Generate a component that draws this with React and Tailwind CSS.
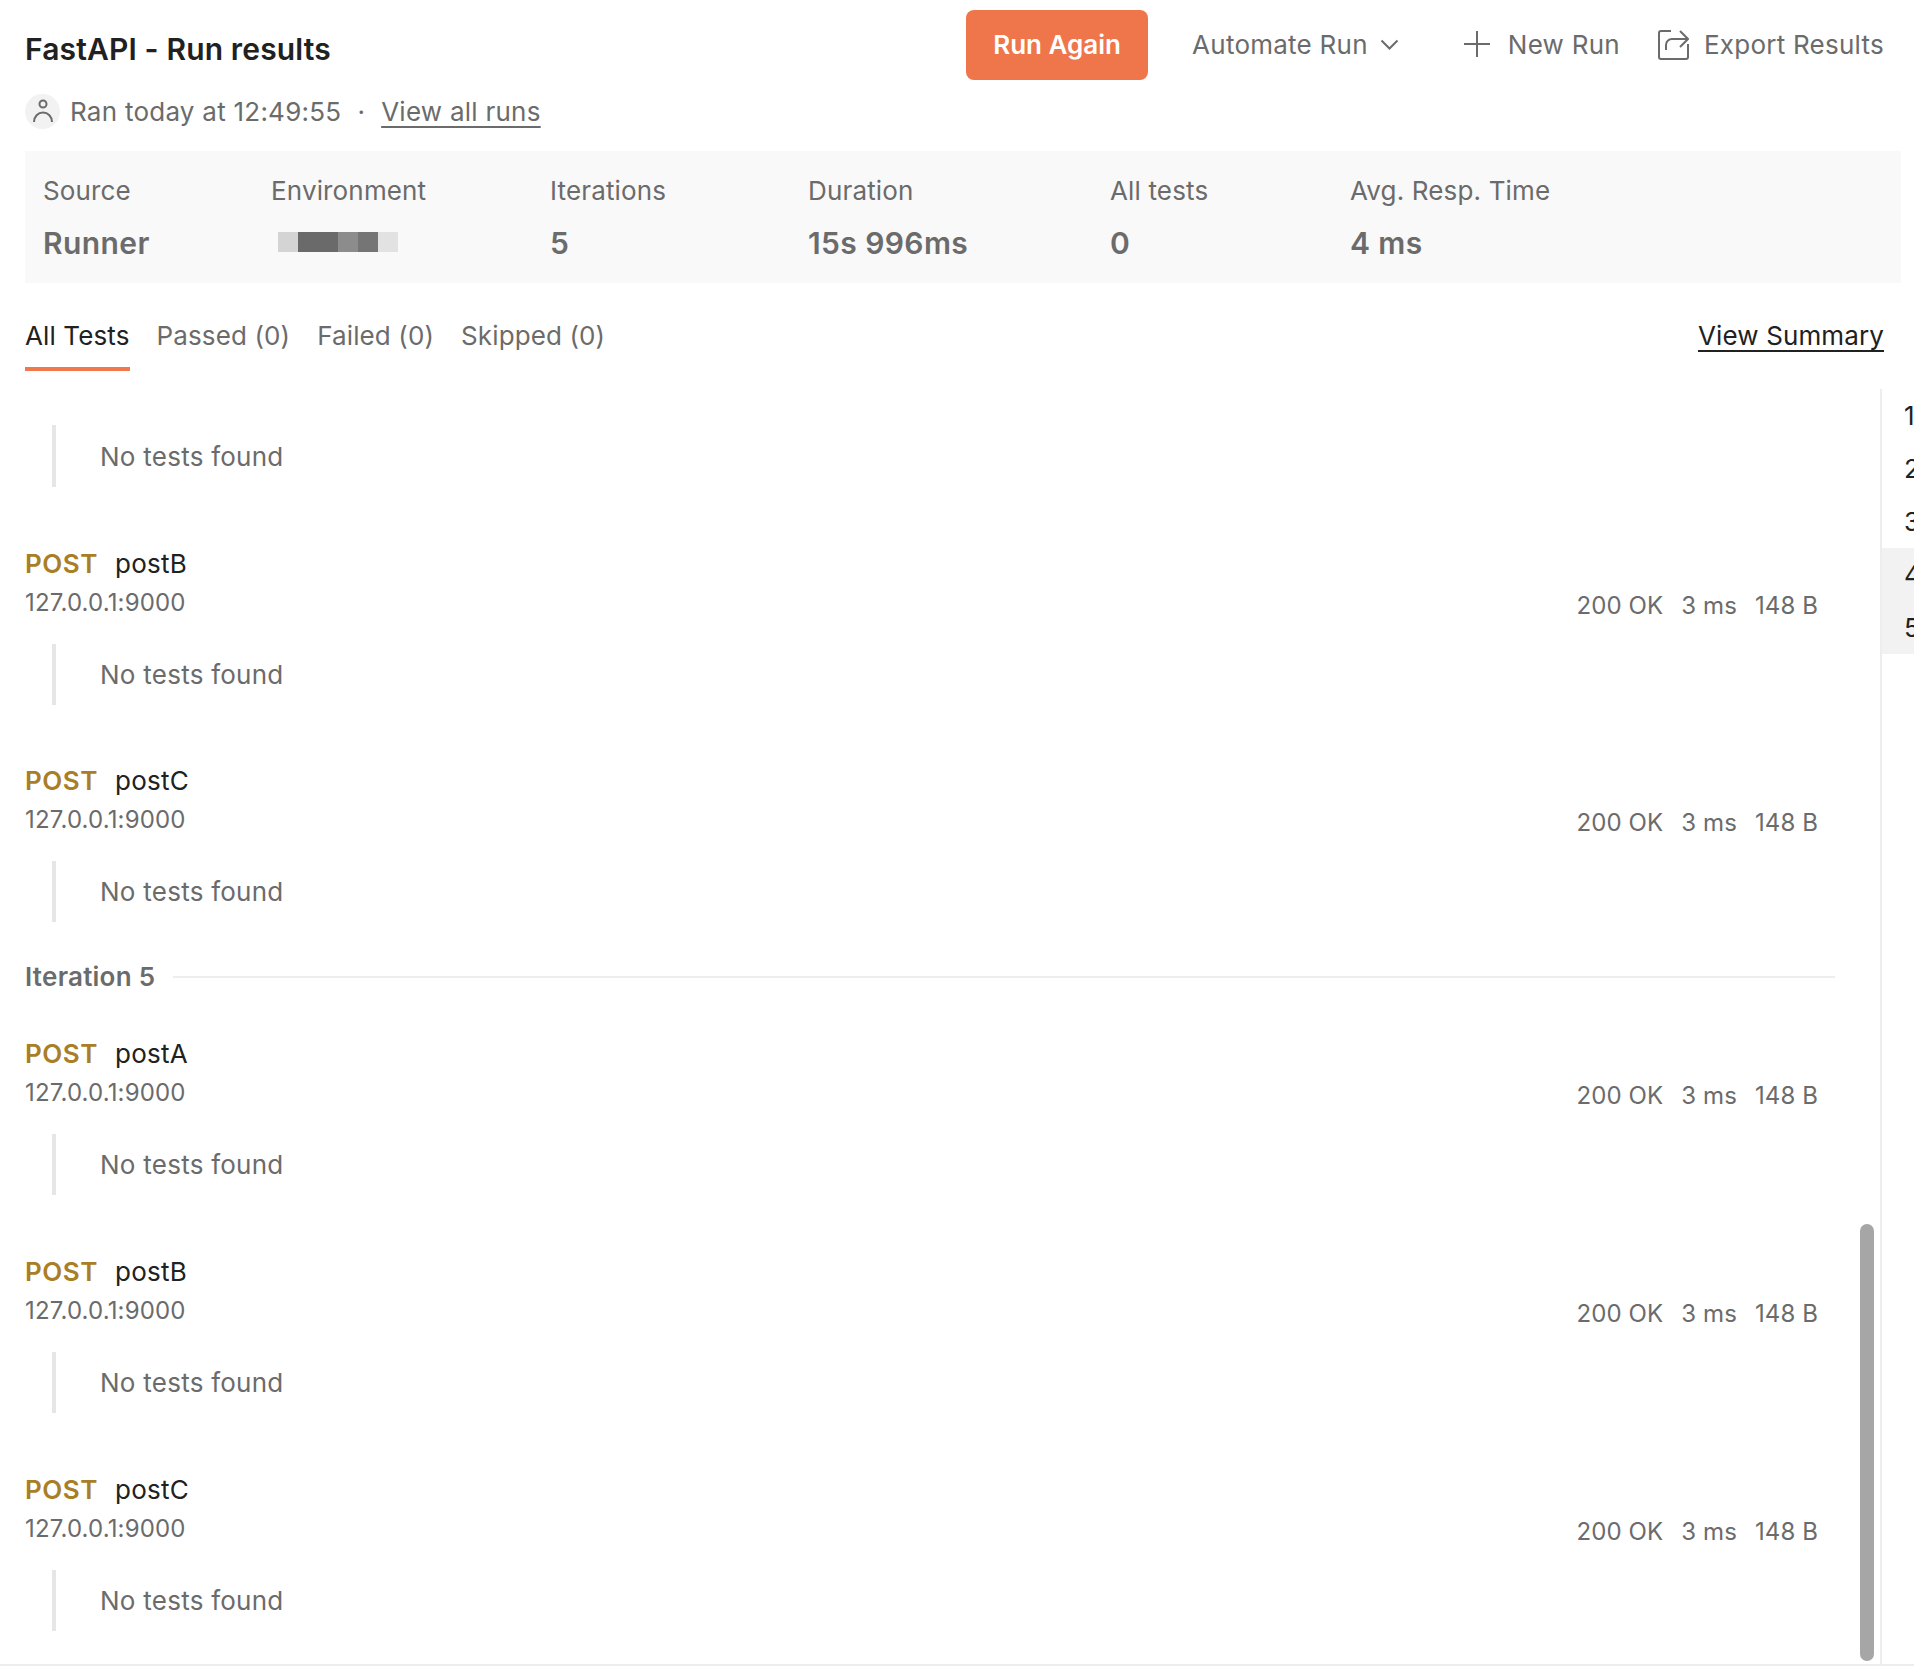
import React from "react";

const Req = ({ name }) => (
  <div className="h-[218px] flex flex-col">
    <div className="flex items-start justify-between pr-[62px]">
      <div>
        <div className="h-[39px] flex items-center text-[26px]">
          <span className="font-semibold text-[#a97e27] w-[90px] tracking-[0.5px]">POST</span>
          <span className="text-[#212121]">{name}</span>
        </div>
        <div className="h-[39px] flex items-center text-[24px] text-[#6b6b6b] tracking-[0.15px]">127.0.0.1:9000</div>
      </div>
      <Meta />
    </div>
    <Found />
  </div>
);

const Meta = () => (
  <div className="mt-[46px] h-[32px] flex items-center gap-[18px] text-[24px] text-[#6b6b6b] tracking-[0.1px]">
    <span>200 OK</span>
    <span>3 ms</span>
    <span>148 B</span>
  </div>
);

const Found = () => (
  <div className="mt-[22px] ml-[27px] h-[61px] border-l-4 border-[#e6e6e6] pl-[44px] flex items-center text-[26px] text-[#6b6b6b]">
    No tests found
  </div>
);

const Stat = ({ w, label, value }) => (
  <div style={{ width: w }}>
    <div className="h-[32px] flex items-center text-[26px] text-[#6b6b6b] tracking-[0.15px]">{label}</div>
    <div className="mt-[21px] h-[32px] flex items-center text-[30px] font-semibold text-[#6b6b6b] tracking-[0.4px]">{value}</div>
  </div>
);

export default function App() {
  return (
    <div className="w-[1914px] h-[1668px] overflow-hidden bg-white font-['Inter',sans-serif] tracking-[0.25px] flex flex-col">
      <header className="h-[151px] flex justify-between pl-[25px] pr-[30px]">
        <div>
          <h1 className="mt-[30px] h-[38px] flex items-center text-[30px] font-semibold text-[#212121] tracking-[0.15px]">FastAPI - Run results</h1>
          <div className="mt-[24px] flex items-center text-[26px] text-[#6b6b6b]">
            <span className="w-[35px] h-[35px] rounded-full bg-[#f2f2f2] flex items-center justify-center mr-[10px]">
              <svg width="22" height="26" viewBox="0 0 22 26" fill="none" stroke="#6b6b6b" strokeWidth="2">
                <circle cx="11" cy="5" r="3.5" />
                <path d="M2 23a9 9.5 0 0 1 18 0" />
              </svg>
            </span>
            <span>Ran today at 12:49:55</span>
            <span className="mx-[16px]">·</span>
            <span className="underline decoration-2 underline-offset-[5px]">View all runs</span>
          </div>
        </div>
        <div className="flex items-start text-[26px] text-[#6b6b6b]">
          <button className="mt-[10px] w-[182px] h-[70px] pb-[2px] rounded-[8px] bg-[#ef764a] text-white font-semibold text-[26px] tracking-normal">Run Again</button>
          <span className="mt-[24px] h-[40px] flex items-center ml-[44px]">Automate Run
            <svg className="ml-[12px]" width="19" height="11" viewBox="0 0 19 11" fill="none" stroke="#6b6b6b" strokeWidth="2"><path d="M1.5 1.5l8 8 8-8" /></svg>
          </span>
          <span className="mt-[24px] h-[40px] flex items-center ml-[64px]">
            <svg className="mr-[17px]" width="28" height="28" viewBox="0 0 28 28" fill="none" stroke="#6b6b6b" strokeWidth="2"><path d="M14 1v26M1 14h26" /></svg>
            New Run
          </span>
          <span className="mt-[24px] h-[40px] flex items-center ml-[38px]">
            <svg className="mr-[15px]" width="31" height="31" viewBox="0 0 31 31" fill="none" stroke="#6b6b6b" strokeWidth="2"><path d="M13 2H3a2 2 0 0 0-2 2v24a2 2 0 0 0 2 2h25a2 2 0 0 0 2-2V15" /><path d="M8 21v-5a6 6 0 0 1 6-6h16M22 2l8 8-8 8" /></svg>
            Export Results
          </span>
        </div>
      </header>

      <section className="ml-[25px] mr-[13px] h-[132px] bg-[#f9f9f9] pl-[18px] pt-[23px] flex">
        <Stat w={228} label="Source" value="Runner" />
        <div className="w-[279px]">
          <div className="h-[32px] flex items-center text-[26px] text-[#6b6b6b] tracking-[0.15px]">Environment</div>
          <div className="mt-[26px] ml-[7px] flex h-[20px] w-[120px] blur-[0.5px]">
            <div className="w-[20px] bg-[#d4d4d4]" />
            <div className="w-[40px] bg-[#6a6a6a]" />
            <div className="w-[20px] bg-[#8c8c8c]" />
            <div className="w-[20px] bg-[#757575]" />
            <div className="w-[20px] bg-[#e2e2e2]" />
          </div>
        </div>
        <Stat w={258} label="Iterations" value="5" />
        <Stat w={302} label="Duration" value="15s 996ms" />
        <Stat w={240} label="All tests" value="0" />
        <Stat w={300} label="Avg. Resp. Time" value="4 ms" />
      </section>

      <nav className="h-[106px] pl-[25px] pr-[30px] flex items-start justify-between text-[26px] text-[#6b6b6b] tracking-[0.12px]">
        <div className="flex gap-[27px]">
          <span className="pt-[33px] h-[88px] border-b-4 border-[#f1784a] text-[#212121]">All Tests</span>
          <span className="pt-[33px]">Passed (0)</span>
          <span className="pt-[33px]">Failed (0)</span>
          <span className="pt-[33px]">Skipped (0)</span>
        </div>
        <span className="pt-[33px] text-[#212121] underline decoration-2 underline-offset-[5px]">View Summary</span>
      </nav>

      <div className="h-[1277px] flex border-b-2 border-[#ededed]">
        <main className="flex-1 min-w-0 pl-[25px] relative overflow-hidden">
          <div className="h-[155px] flex items-start">
            <div className="ml-[27px] mt-[36px] h-[62px] border-l-4 border-[#e6e6e6] pl-[44px] flex items-center text-[26px] text-[#6b6b6b]">No tests found</div>
          </div>
          <div className="h-[217px]">
            <Req name="postB" />
          </div>
          <div className="h-[189px]">
            <Req name="postC" />
          </div>
          <div className="h-[53px] mb-[31px] flex items-center pr-[45px]">
            <span className="text-[26px] font-semibold text-[#6b6b6b] mr-[18px]">Iteration 5</span>
            <span className="flex-1 h-[2px] bg-[#ededed]" />
          </div>
          <Req name="postA" />
          <Req name="postB" />
          <Req name="postC" />
          <div className="absolute right-[6px] top-[835px] w-[14px] h-[437px] rounded-full bg-[#a6a6a6]" />
        </main>
        <aside className="w-[34px] border-l-2 border-[#ededed] text-[26px] text-[#212121] tracking-normal overflow-hidden">
          {[1, 2, 3, 4, 5].map((n) => (
            <div key={n} className={`h-[53px] flex items-center pl-[22px] ${n >= 4 ? "bg-[#f2f2f2]" : ""}`}>{n}</div>
          ))}
        </aside>
      </div>
    </div>
  );
}
